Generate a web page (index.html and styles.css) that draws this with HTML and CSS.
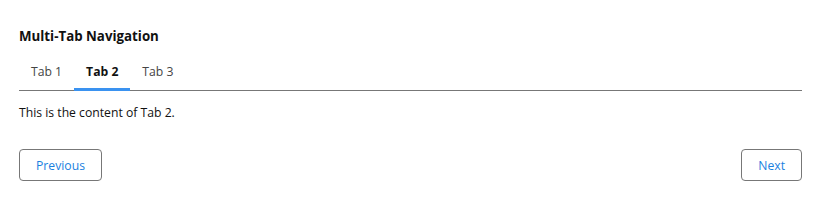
FILE: index.html
```html
<!DOCTYPE html>
<html>
<head>
<meta charset="utf-8">
<link rel="stylesheet" href="styles.css">
</head>
<body>
<div class="app">
  <h2 class="title">Multi-Tab Navigation</h2>
  <div class="tabs">
    <button class="tab">Tab 1</button>
    <button class="tab active">Tab 2</button>
    <button class="tab">Tab 3</button>
  </div>
  <p class="content">This is the content of Tab 2.</p>
  <div class="nav">
    <button class="btn">Previous</button>
    <button class="btn">Next</button>
  </div>
</div>
</body>
</html>
```
FILE: styles.css
```css
html, body { margin: 0; padding: 0; background: #fff; }
body { font-family: "Open Sans", "Noto Sans", sans-serif; font-size: 12.2px; color: #111; }
.app { padding: 27px 15px 0 19px; }
.title { margin: 0 0 12px; font-size: 13.3px; font-weight: 700; line-height: 18px; }
.tabs { display: flex; border-bottom: 1px solid #777; }
.tab { font: inherit; background: none; border: none; border-bottom: 3px solid transparent; margin-bottom: -1px; padding: 6px 12px 7px; color: #444; cursor: pointer; line-height: 18px; }
.tab.active { font-weight: 700; color: #111; border-bottom-color: #3a92f0; }
.content { margin: 13px 0 0; line-height: 18px; }
.nav { display: flex; justify-content: space-between; margin-top: 27px; }
.btn { font: inherit; color: #1a7fe0; background: #fff; border: 1px solid #777; border-radius: 4px; height: 32px; padding: 0 16px; cursor: pointer; }
```
